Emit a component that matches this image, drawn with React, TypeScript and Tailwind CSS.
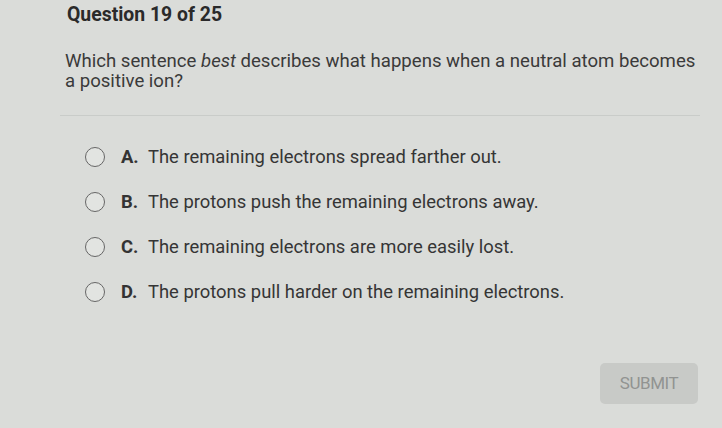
const options = [
  { letter: "A.", text: "The remaining electrons spread farther out." },
  { letter: "B.", text: "The protons push the remaining electrons away." },
  { letter: "C.", text: "The remaining electrons are more easily lost." },
  { letter: "D.", text: "The protons pull harder on the remaining electrons." },
];

export default function App() {
  return (
    <div
      className="w-[722px] h-[428px] bg-[#dadcd9] text-[#353535] overflow-hidden flex flex-col"
      style={{ fontFamily: "Roboto, 'Liberation Sans', sans-serif" }}
    >
      <div className="pl-[67px] pt-[3px]">
        <h1 className="text-[19.4px] font-bold leading-[24px] text-[#2a2a2a]">Question 19 of 25</h1>
      </div>

      <p className="pl-[65px] pr-[20px] mt-[24px] text-[18.6px] leading-[20px] text-[#3a3a3a]">
        Which sentence <i className="inline-block">best</i> describes what happens when a neutral atom becomes a
        positive ion?
      </p>

      <div className="ml-[60px] mr-[22px] mt-[24px] h-px bg-[#c9ccc9]" />

      <div className="mt-[30px] pl-[85px] flex flex-col gap-[23px]">
        {options.map((o) => (
          <label key={o.letter} className="flex items-center text-[18.4px] leading-[22px]">
            <span className="w-[20px] h-[20px] rounded-full border-[1.5px] border-[#666] bg-[#e2e4e1] shrink-0" />
            <span className="font-bold ml-[16px] w-[27px] text-[#333]">{o.letter}</span>
            <span className="text-[#353535]">{o.text}</span>
          </label>
        ))}
      </div>

      <div className="flex-1" />
      <div className="flex justify-end pr-[24px] pb-[24px]">
        <button className="w-[98px] h-[41px] rounded-[5px] bg-[#c8cac7] text-[#919391] text-[17px] tracking-tight">
          SUBMIT
        </button>
      </div>
    </div>
  );
}
